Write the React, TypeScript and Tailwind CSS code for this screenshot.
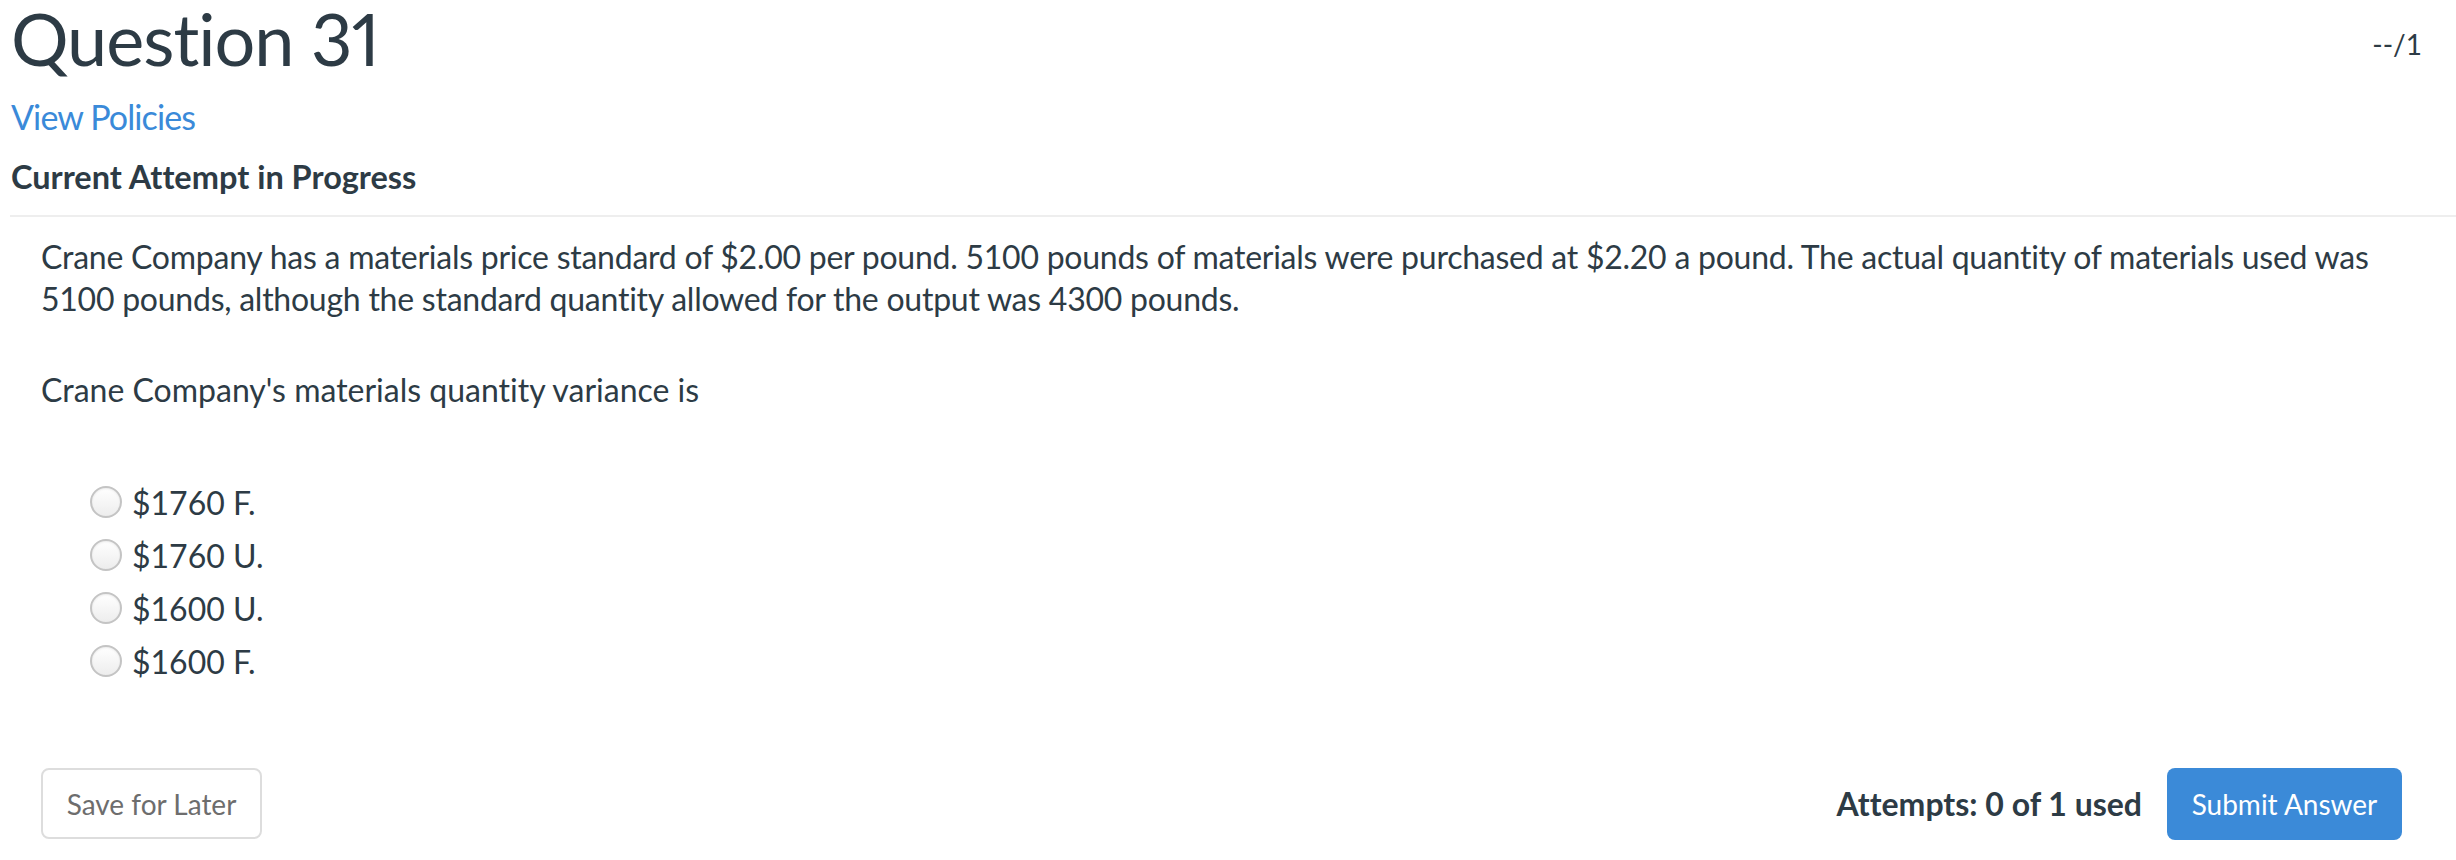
import React from "react";

function Radio() {
  return (
    <span className="inline-block w-[32px] h-[32px] rounded-full border-2 border-[#c4c4c4] bg-gradient-to-b from-white to-[#ededed] shadow-[inset_0_1px_2px_rgba(0,0,0,0.08)] shrink-0" />
  );
}

const options = ["$1760 F.", "$1760 U.", "$1600 U.", "$1600 F."];

export default function App() {
  return (
    <div className="w-[2456px] h-[860px] bg-white text-[#2d3b45] font-['Lato','Noto_Sans',sans-serif] [font-variant-ligatures:none] overflow-hidden">
      <div className="flex justify-between items-start pl-[11px] pr-[34px]">
        <h1 className="text-[72px] leading-[62px] mt-[7px] font-normal tracking-[-1px] proportional-nums">Question 31</h1>
        <div className="text-[28px] leading-[28px] mt-[30px]">--/1</div>
      </div>
      <div className="pl-[11px]">
        <a className="block text-[34px] leading-[40px] mt-[28px] text-[#3a8ad9] tracking-[-0.9px]">View Policies</a>
        <div className="text-[32.5px] leading-[40px] mt-[20px] font-bold">Current Attempt in Progress</div>
      </div>
      <div className="ml-[10px] mt-[18px] h-[2px] bg-[#eeeeee]" />
      <div className="pl-[41px] pr-[54px]">
        <p className="text-[32px] leading-[41.6px] mt-[19px] tracking-[-0.25px]">
          Crane Company has a materials price standard of $2.00 per pound. 5100 pounds of materials were purchased at $2.20 a pound. The actual quantity of materials used was 5100 pounds, although the standard quantity allowed for the output was 4300 pounds.
        </p>
        <p className="text-[32px] leading-[41.6px] mt-[50px]">Crane Company's materials quantity variance is</p>
        <div className="mt-[65px] ml-[49px] flex flex-col">
          {options.map((o) => (
            <label key={o} className="flex items-center h-[53px] gap-[10px] text-[32px] leading-[53px]">
              <Radio />
              <span>{o}</span>
            </label>
          ))}
        </div>
        <div className="mt-[80px] flex items-center justify-between">
          <button className="w-[221px] h-[71px] border-2 border-[#dddddd] rounded-[8px] bg-white text-[28px] text-[#6d6d6d]">
            Save for Later
          </button>
          <div className="flex items-center gap-[25px]">
            <span className="text-[32px] font-bold">Attempts: 0 of 1 used</span>
            <button className="w-[235px] h-[72px] rounded-[8px] bg-[#3b8ad8] text-white text-[28px]">
              Submit Answer
            </button>
          </div>
        </div>
      </div>
    </div>
  );
}
